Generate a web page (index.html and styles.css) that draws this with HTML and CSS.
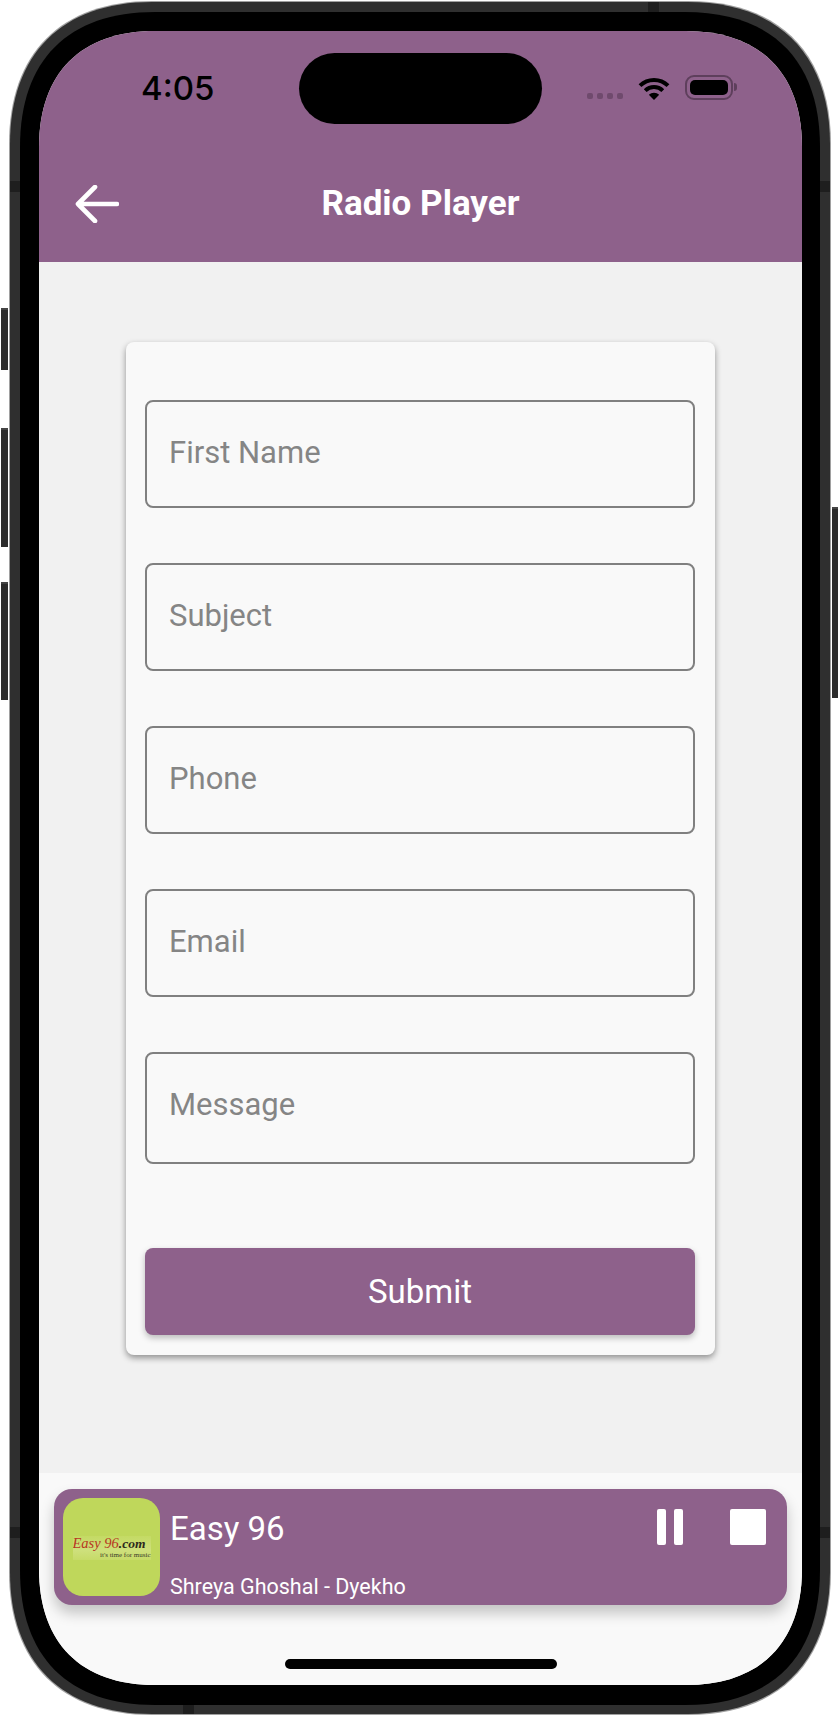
FILE: index.html
```
<!DOCTYPE html>
<html>
<head>
    <meta charset="utf-8">
    <title>Radio Player</title>
    <link rel="stylesheet" href="styles.css">
</head>
<body>
    <div class="device">
        <div class="edge">
            <div class="rim">
                <div class="bezel">
                    <div class="screen">
                        <header class="app-header">
                            <div class="status-bar">
                                <span class="time">4:05</span>
                                <span class="island"></span>
                                <div class="status-icons">
                                    <span class="signal"><i></i><i></i><i></i><i></i></span>
                                    <svg class="wifi" width="32" height="25" viewBox="0 0 32 25">
                                        <path d="M2 10.6a20 20 0 0 1 28 0M7.2 15.6a12.6 12.6 0 0 1 17.6 0" fill="none" stroke="#000" stroke-width="4"/>
                                        <path d="M16 25l-5.2-5.2a7.4 7.4 0 0 1 10.4 0z" fill="#000"/>
                                    </svg>
                                    <span class="battery"><span class="battery-level"></span></span>
                                    <span class="battery-nub"></span>
                                </div>
                            </div>
                            <div class="nav-bar">
                                <svg class="back" width="44" height="38" viewBox="0 0 44 38">
                                    <path d="M20 2L3 19l17 17M3 19h39" fill="none" stroke="#fff" stroke-width="4.6" stroke-linecap="round" stroke-linejoin="round"/>
                                </svg>
                                <h1 class="title">Radio Player</h1>
                            </div>
                        </header>

                        <main class="content">
                            <form class="card">
                                <input class="field" placeholder="First Name">
                                <input class="field" placeholder="Subject">
                                <input class="field" placeholder="Phone">
                                <input class="field" placeholder="Email">
                                <textarea class="field field-message" placeholder="Message"></textarea>
                                <button class="submit" type="button">Submit</button>
                            </form>
                        </main>

                        <footer class="bottom">
                            <div class="player">
                                <div class="logo">
                                    <div class="logo-image">
                                        <span class="logo-name">Easy 96<b>.com</b></span>
                                        <span class="logo-tag">it's time for music</span>
                                    </div>
                                </div>
                                <div class="track">
                                    <div class="station">Easy 96</div>
                                    <div class="song">Shreya Ghoshal - Dyekho</div>
                                </div>
                                <div class="controls">
                                    <span class="pause"><i></i><i></i></span>
                                    <span class="stop"></span>
                                </div>
                            </div>
                            <div class="home-bar"></div>
                        </footer>
                    </div>
                </div>
            </div>
        </div>

        <span class="side-btn btn-mute"></span>
        <span class="side-btn btn-up"></span>
        <span class="side-btn btn-down"></span>
        <span class="side-btn btn-power"></span>
        <span class="band band-lt"></span>
        <span class="band band-rt"></span>
        <span class="band band-lb"></span>
        <span class="band band-rb"></span>
        <span class="band band-top"></span>
        <span class="band band-bottom"></span>
    </div>
</body>
</html>
```

FILE: styles.css
```
* {
    box-sizing: border-box;
}
html, body {
    height: 1716px;
    overflow: hidden;
}
body {
    margin: 0;
    padding: 1px 0 0 9px;
    background: #fff;
    font-family: Roboto, "Liberation Sans", sans-serif;
}

/* phone frame, the corners are squircles so plain border-radius won't do */
.device {
    position: relative;
    width: 822px;
    height: 1714px;
}
.edge {
    height: 100%;
    padding: 1px;
    background: #a0a0a0;
    clip-path: path("M0 143C0 52 52 0 143 0H679C770 0 822 52 822 143V1571C822 1662 770 1714 679 1714H143C52 1714 0 1662 0 1571Z");
}
.rim {
    height: 100%;
    padding: 10px 10px 9px;
    background: #2f2f2f;
    clip-path: path("M0 142C0 52 52 0 142 0H678C768 0 820 52 820 142V1570C820 1660 768 1712 678 1712H142C52 1712 0 1660 0 1570Z");
}
.bezel {
    height: 100%;
    padding: 19px 18px 20px 19px;
    background: #000;
    clip-path: path("M0 135C0 48 48 0 135 0H665C752 0 800 48 800 135V1558C800 1645 752 1693 665 1693H135C48 1693 0 1645 0 1558Z");
}
.screen {
    display: flex;
    flex-direction: column;
    height: 100%;
    background: #f1f1f1;
    clip-path: path("M0 116C0 42 42 0 116 0H647C721 0 763 42 763 116V1538C763 1612 721 1654 647 1654H116C42 1654 0 1612 0 1538Z");
}

/* hardware bits on the frame */
.side-btn {
    position: absolute;
    width: 7px;
    background: #2c2c2c;
    border-top: 2px solid #444;
}
.btn-mute { left: -8px; top: 307px; height: 62px; }
.btn-up { left: -8px; top: 427px; height: 119px; }
.btn-down { left: -8px; top: 581px; height: 118px; }
.btn-power { left: 823px; top: 506px; height: 191px; width: 6px; }
.band {
    position: absolute;
    background: #1e1e1e;
}
.band-lt { left: 1px; top: 180px; width: 10px; height: 11px; }
.band-rt { right: 1px; top: 180px; width: 10px; height: 11px; }
.band-lb { left: 1px; top: 1526px; width: 10px; height: 11px; }
.band-rb { right: 1px; top: 1526px; width: 10px; height: 11px; }
.band-top { left: 639px; top: 1px; width: 11px; height: 10px; }
.band-bottom { left: 174px; top: 1704px; width: 11px; height: 9px; }

/* header */
.app-header {
    height: 231px;
    background: #8e618b;
    flex-shrink: 0;
}
.status-bar {
    position: relative;
    height: 129px;
}
.time {
    position: absolute;
    left: 102px;
    top: 37px;
    font-family: Inter, sans-serif;
    font-size: 33px;
    font-weight: 500;
    line-height: 40px;
    color: #000;
}
.island {
    position: absolute;
    left: 260px;
    top: 22px;
    width: 243px;
    height: 71px;
    background: #000;
    border-radius: 36px;
}
.status-icons {
    position: absolute;
    left: 548px;
    top: 44px;
    display: flex;
}
.signal {
    display: flex;
    gap: 4px;
    margin: 18px 15px 0 0;
}
.signal i {
    width: 6px;
    height: 6px;
    background: #6f4a6d;
    border-radius: 2px;
}
.wifi {
    margin-right: 15px;
}
.battery {
    width: 48px;
    height: 25px;
    padding: 3px;
    border: 2px solid #5e3f5c;
    border-radius: 9px;
}
.battery-level {
    display: block;
    height: 100%;
    background: #000;
    border-radius: 5px;
}
.battery-nub {
    width: 3px;
    height: 8px;
    margin: 8px 0 0 1px;
    background: #5e3f5c;
    border-radius: 0 3px 3px 0;
}
.nav-bar {
    position: relative;
    display: flex;
    justify-content: center;
    height: 102px;
}
.back {
    position: absolute;
    left: 36px;
    top: 25px;
}
.title {
    margin: 23px 0 0;
    font-size: 35px;
    font-weight: 700;
    line-height: 42px;
    color: #fff;
}

/* form */
.content {
    flex: 1;
    padding-top: 80px;
}
.card {
    display: flex;
    flex-direction: column;
    gap: 55px;
    width: 589px;
    margin: 0 auto;
    padding: 58px 20px 20px 19px;
    background: #f9f9f9;
    border-radius: 8px;
    box-shadow: 0 3px 6px rgba(0, 0, 0, 0.4);
}
.field {
    display: block;
    width: 100%;
    height: 108px;
    padding: 0 22px 4px;
    background: transparent;
    border: 2px solid #808080;
    border-radius: 8px;
    outline: none;
    font-family: Roboto, sans-serif;
    font-size: 31px;
    color: #333;
}
.field::placeholder {
    color: #858585;
    opacity: 1;
}
.field-message {
    height: 112px;
    padding-top: 34px;
    line-height: 34px;
    resize: none;
}
.submit {
    height: 87px;
    margin-top: 29px;
    background: #8e618b;
    border: 0;
    border-radius: 8px;
    box-shadow: 0 3px 6px rgba(0, 0, 0, 0.25);
    font-family: Roboto, sans-serif;
    font-size: 33px;
    color: #fff;
}

/* player */
.bottom {
    height: 212px;
    padding: 16px 15px 0;
    background: #f9f9f9;
    flex-shrink: 0;
}
.player {
    display: flex;
    height: 116px;
    padding: 9px 21px 9px 9px;
    background: #8e618b;
    border-radius: 18px;
    box-shadow: 0 8px 14px rgba(0, 0, 0, 0.22);
    color: #fff;
}
.logo {
    display: flex;
    align-items: center;
    justify-content: center;
    flex-shrink: 0;
    width: 97px;
    height: 98px;
    padding-top: 1px;
    background: #bfd75b;
    border-radius: 20px;
}
.logo-image {
    display: flex;
    flex-direction: column;
    width: 78px;
    height: 24px;
    background: linear-gradient(#c4da64, #cee07c 60%, #c6db68);
    font-family: "Liberation Serif", serif;
    overflow: hidden;
}
.logo-name {
    font-size: 14.5px;
    font-style: italic;
    font-weight: 400;
    line-height: 15px;
    color: #b8371f;
    white-space: nowrap;
}
.logo-name b {
    color: #2e2a1c;
    font-size: 13.5px;
}
.logo-tag {
    font-size: 7px;
    line-height: 8px;
    text-align: right;
    color: #3a3a2a;
    white-space: nowrap;
}
.track {
    display: flex;
    flex-direction: column;
    justify-content: space-between;
    flex: 1;
    padding-left: 10px;
}
.station {
    font-size: 33px;
    line-height: 38px;
    margin-top: 12px;
}
.song {
    font-size: 21.5px;
    line-height: 24px;
    margin-bottom: -3px;
}
.controls {
    display: flex;
    gap: 47px;
    padding-top: 11px;
}
.pause {
    display: flex;
    gap: 8px;
}
.pause i {
    width: 9px;
    height: 36px;
    background: #fff;
    border-radius: 2px;
}
.stop {
    width: 36px;
    height: 36px;
    background: #fff;
    border-radius: 2px;
}
.home-bar {
    width: 272px;
    height: 10px;
    margin: 54px auto 0;
    background: #000;
    border-radius: 5px;
}
```
